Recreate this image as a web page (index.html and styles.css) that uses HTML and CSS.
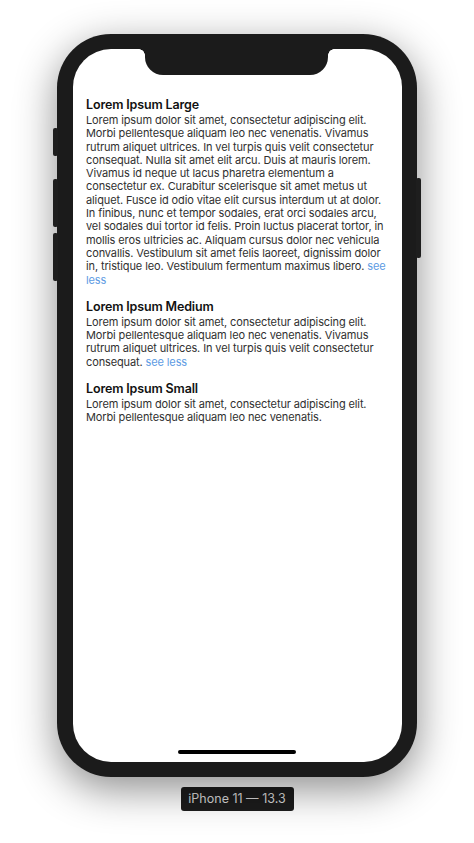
FILE: index.html
```html
<!DOCTYPE html>
<html>
<head>
<meta charset="utf-8">
<link rel="stylesheet" href="styles.css">
</head>
<body>
<div class="stage">
  <div class="device">
    <div class="btn btn-silent"></div>
    <div class="btn btn-volup"></div>
    <div class="btn btn-voldown"></div>
    <div class="btn btn-power"></div>
    <div class="screen">
      <div class="notch"></div>
      <div class="content">
        <section class="block">
          <h2 class="title">Lorem Ipsum Large</h2>
          <p class="text">Lorem ipsum dolor sit amet, consectetur adipiscing elit. Morbi pellentesque aliquam leo nec venenatis. Vivamus rutrum aliquet ultrices. In vel turpis quis velit consectetur consequat. Nulla sit amet elit arcu. Duis at mauris lorem. Vivamus id neque ut lacus pharetra elementum a consectetur ex. Curabitur scelerisque sit amet metus ut aliquet. Fusce id odio vitae elit cursus interdum ut at dolor. In finibus, nunc et tempor sodales, erat orci sodales arcu, vel sodales dui tortor id felis. Proin luctus placerat tortor, in mollis eros ultricies ac. Aliquam cursus dolor nec vehicula convallis. Vestibulum sit amet felis laoreet, dignissim dolor in, tristique leo. Vestibulum fermentum maximus libero. <span class="more">see less</span></p>
        </section>
        <section class="block">
          <h2 class="title">Lorem Ipsum Medium</h2>
          <p class="text">Lorem ipsum dolor sit amet, consectetur adipiscing elit. Morbi pellentesque aliquam leo nec venenatis. Vivamus rutrum aliquet ultrices. In vel turpis quis velit consectetur consequat. <span class="more">see less</span></p>
        </section>
        <section class="block">
          <h2 class="title">Lorem Ipsum Small</h2>
          <p class="text">Lorem ipsum dolor sit amet, consectetur adipiscing elit. Morbi pellentesque aliquam leo nec venenatis.</p>
        </section>
      </div>
      <div class="home-bar"></div>
    </div>
  </div>
  <div class="caption">iPhone 11 — 13.3</div>
</div>
</body>
</html>
```
FILE: styles.css
```css
* { box-sizing: border-box; }
html, body {
  margin: 0;
  padding: 0;
  background: #ffffff;
}
body {
  font-family: Inter, "Noto Sans", sans-serif;
  width: 474px;
  height: 843px;
  overflow: hidden;
}
.stage {
  display: flex;
  flex-direction: column;
  align-items: center;
  padding-top: 34px;
}
.device {
  position: relative;
  width: 360px;
  height: 743px;
  background: #1b1b1b;
  border-radius: 54px;
  padding: 15px 15px 15px 16px;
  box-shadow: 0 12px 42px rgba(0, 0, 0, 0.45);
}
.btn {
  position: absolute;
  width: 5px;
  background: #1e1e1e;
  border-radius: 2px;
}
.btn-silent { left: -4px; top: 94px; height: 28px; }
.btn-volup { left: -4px; top: 145px; height: 48px; }
.btn-voldown { left: -4px; top: 199px; height: 48px; }
.btn-power { right: -4px; top: 144px; height: 80px; }
.screen {
  position: relative;
  width: 100%;
  height: 100%;
  background: #ffffff;
  border-radius: 38px;
  overflow: hidden;
}
.notch {
  position: absolute;
  top: 0;
  left: 72px;
  width: 183px;
  height: 26px;
  background: #1b1b1b;
  border-radius: 0 0 18px 18px;
}
.notch::before,
.notch::after {
  content: "";
  position: absolute;
  top: 0;
  width: 6px;
  height: 6px;
}
.notch::before {
  left: -6px;
  background: radial-gradient(circle at 0 100%, transparent 5.5px, #1b1b1b 6px);
}
.notch::after {
  right: -6px;
  background: radial-gradient(circle at 100% 100%, transparent 5.5px, #1b1b1b 6px);
}
.content {
  padding: 49px 13px 0 13px;
}
.block {
  margin-bottom: 13px;
}
.title {
  margin: 0 0 2px 0;
  font-size: 12.5px;
  letter-spacing: -0.15px;
  line-height: 14px;
  font-weight: 600;
  color: #111111;
}
.text {
  margin: 0;
  font-size: 11px;
  letter-spacing: -0.12px;
  line-height: 13.3px;
  color: #303030;
}
.more {
  color: #5d9be3;
}
.home-bar {
  position: absolute;
  left: 105px;
  bottom: 8px;
  width: 118px;
  height: 4px;
  border-radius: 2px;
  background: #000000;
}
.caption {
  margin-top: 10px;
  width: 113px;
  height: 24px;
  border-radius: 3px;
  background: #1c1c1c;
  color: #dadada;
  font-size: 12.5px;
  line-height: 24px;
  text-align: center;
}
```
